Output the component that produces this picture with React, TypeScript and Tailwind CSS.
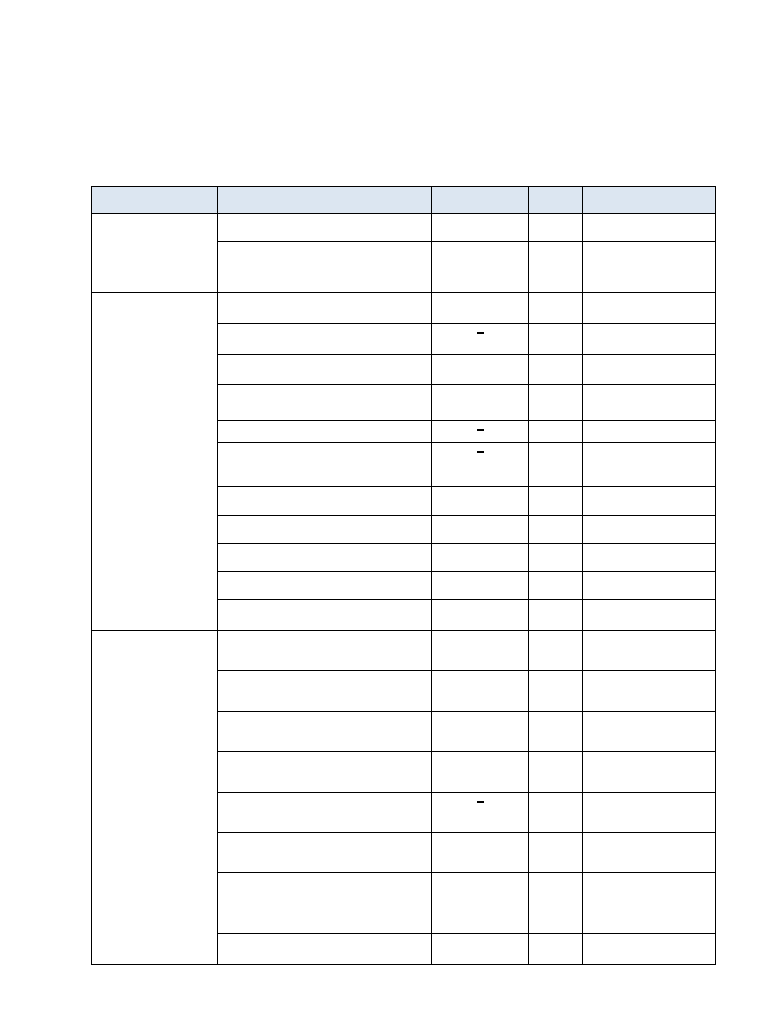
const GROUPS: { rows: { h: number; dash?: boolean }[] }[] = [
  { rows: [{ h: 28 }, { h: 51 }] },
  {
    rows: [
      { h: 31 },
      { h: 31, dash: true },
      { h: 30 },
      { h: 36 },
      { h: 22, dash: true },
      { h: 44, dash: true },
      { h: 29 },
      { h: 28 },
      { h: 28 },
      { h: 28 },
      { h: 31 },
    ],
  },
  {
    rows: [
      { h: 40 },
      { h: 41 },
      { h: 40 },
      { h: 41 },
      { h: 40, dash: true },
      { h: 40 },
      { h: 61 },
      { h: 31 },
    ],
  },
];

const cell = "border border-black p-0 align-top";

export default function App() {
  return (
    <div className="min-h-[1024px] w-[768px] bg-white pt-[186px] pl-[91px] font-['Liberation_Sans',Arial,sans-serif]">
      <table className="w-[625px] table-fixed border-collapse">
        <colgroup>
          <col className="w-[126px]" />
          <col className="w-[214px]" />
          <col className="w-[97px]" />
          <col className="w-[54px]" />
          <col className="w-[133px]" />
        </colgroup>
        <thead>
          <tr className="h-[27px] bg-[#dce6f1]">
            <th className={cell}></th>
            <th className={cell}></th>
            <th className={cell}></th>
            <th className={cell}></th>
            <th className={cell}></th>
          </tr>
        </thead>
        <tbody>
          {GROUPS.map((g, gi) =>
            g.rows.map((r, ri) => (
              <tr key={`${gi}-${ri}`} style={{ height: r.h }}>
                {ri === 0 && <td className={cell} rowSpan={g.rows.length}></td>}
                <td className={cell}></td>
                <td className={`${cell} text-center`}>
                  {r.dash && (
                    <div className="flex justify-center pt-[8px]">
                      <div className="h-[1.5px] w-[7px] bg-black" />
                    </div>
                  )}
                </td>
                <td className={cell}></td>
                <td className={cell}></td>
              </tr>
            )),
          )}
        </tbody>
      </table>
    </div>
  );
}
